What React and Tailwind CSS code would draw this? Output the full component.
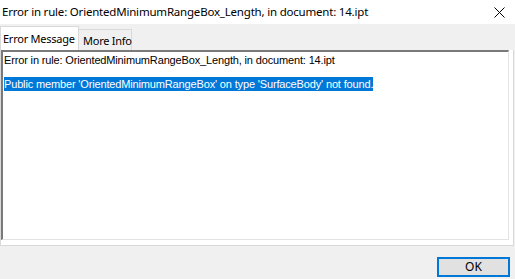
export default function App() {
  return (
    <div className="w-[515px] h-[279px] bg-[#f0f0f0] flex flex-col overflow-hidden" style={{ fontFamily: '"Noto Sans", "Open Sans", sans-serif' }}>
      <div className="h-[24px] bg-white flex items-center justify-between shrink-0">
        <span className="pl-[2px] text-[11.5px] text-black leading-none tracking-[-0.2px] whitespace-nowrap">Error in rule: OrientedMinimumRangeBox_Length, in document: 14.ipt</span>
        <svg width="11" height="11" viewBox="0 0 11 11" className="mr-[10px]">
          <path d="M0.5 0.5 L10.5 10.5 M10.5 0.5 L0.5 10.5" stroke="#000" strokeWidth="1" />
        </svg>
      </div>
      <div className="flex items-end h-[25px] shrink-0 mt-[1px]">
        <div className="w-[79px] h-[24px] bg-white border border-b-0 border-[#d9d9d9] flex items-center pl-[2px] text-[11px] leading-none tracking-[-0.25px] text-black whitespace-nowrap">Error Message</div>
        <div className="w-[53px] h-[21px] bg-[#f0f0f0] border border-b-0 border-l-0 border-[#d9d9d9] flex items-center pl-[4px] text-[11px] leading-none tracking-[-0.25px] text-black whitespace-nowrap">More Info</div>
      </div>
      <div className="w-[514px] h-[196px] bg-white border border-t-0 border-[#d9d9d9] pr-[4px] pb-[5px] flex shrink-0">
        <div className="flex-1 border-t-2 border-l-2 border-t-[#7a7a7a] border-l-[#7a7a7a] border-r border-b border-r-[#e3e3e3] border-b-[#e3e3e3] pt-[1px] pl-[1px] text-[11px] tracking-[-0.15px] text-black leading-[14px] whitespace-nowrap" style={{ fontFamily: '"Liberation Sans", Arial, sans-serif' }}>
          <div>Error in rule: OrientedMinimumRangeBox_Length, in document: 14.ipt</div>
          <div className="mt-[10px]"><span className="bg-[#0078d7] text-white py-[1px]">Public member 'OrientedMinimumRangeBox' on type 'SurfaceBody' not found.</span></div>
        </div>
      </div>
      <div className="flex-1 flex justify-end items-end pr-[5px] pb-[2px]">
        <div className="w-[73px] h-[20px] border-2 border-[#0078d7] bg-[#e1e1e1] flex items-center justify-center text-[12px] leading-none text-black">OK</div>
      </div>
    </div>
  );
}
